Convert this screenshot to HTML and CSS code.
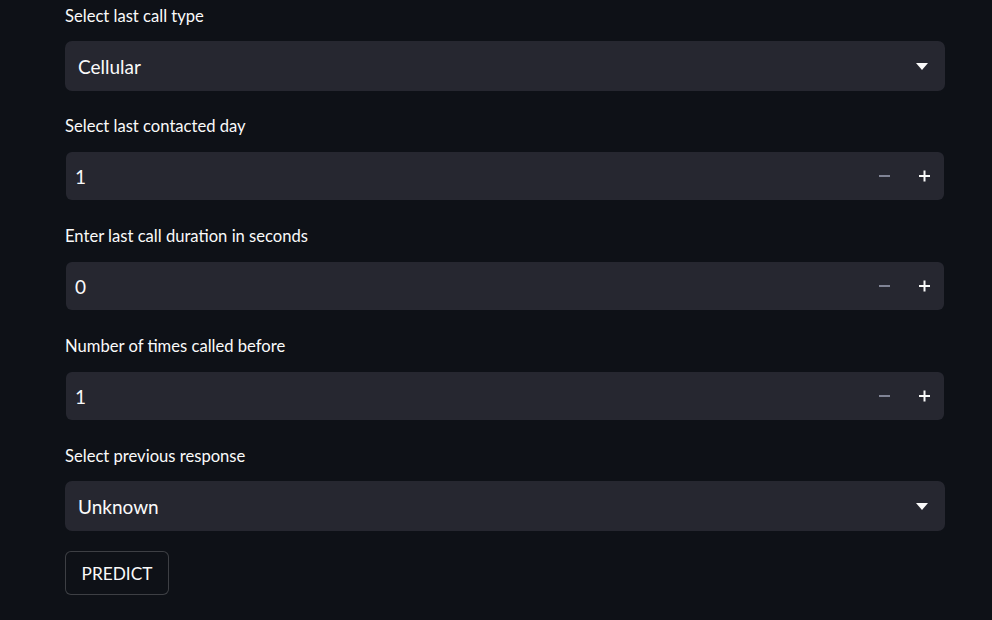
FILE: index.html
```html
<!DOCTYPE html>
<html>
<head>
<meta charset="utf-8">
<link rel="stylesheet" href="styles.css">
</head>
<body>
<main class="form">
  <div class="field">
    <label class="label">Select last call type</label>
    <div class="select">
      <span class="value">Cellular</span>
      <svg class="caret" width="12" height="7" viewBox="0 0 12 7"><path d="M0 0H12L6 7Z" fill="#fafafa"/></svg>
    </div>
  </div>
  <div class="field">
    <label class="label">Select last contacted day</label>
    <div class="number">
      <div class="number-inner">
        <span class="num-value">1</span>
        <span class="step minus"><svg width="11" height="12" viewBox="0 0 11 12"><rect x="0" y="5" width="11" height="2" fill="#808495"/></svg></span>
        <span class="step plus"><svg width="11" height="12" viewBox="0 0 11 12"><rect x="0" y="5" width="11" height="2" fill="#fafafa"/><rect x="4.5" y="0.5" width="2" height="11" fill="#fafafa"/></svg></span>
      </div>
    </div>
  </div>
  <div class="field">
    <label class="label">Enter last call duration in seconds</label>
    <div class="number">
      <div class="number-inner">
        <span class="num-value">0</span>
        <span class="step minus"><svg width="11" height="12" viewBox="0 0 11 12"><rect x="0" y="5" width="11" height="2" fill="#808495"/></svg></span>
        <span class="step plus"><svg width="11" height="12" viewBox="0 0 11 12"><rect x="0" y="5" width="11" height="2" fill="#fafafa"/><rect x="4.5" y="0.5" width="2" height="11" fill="#fafafa"/></svg></span>
      </div>
    </div>
  </div>
  <div class="field">
    <label class="label">Number of times called before</label>
    <div class="number">
      <div class="number-inner">
        <span class="num-value">1</span>
        <span class="step minus"><svg width="11" height="12" viewBox="0 0 11 12"><rect x="0" y="5" width="11" height="2" fill="#808495"/></svg></span>
        <span class="step plus"><svg width="11" height="12" viewBox="0 0 11 12"><rect x="0" y="5" width="11" height="2" fill="#fafafa"/><rect x="4.5" y="0.5" width="2" height="11" fill="#fafafa"/></svg></span>
      </div>
    </div>
  </div>
  <div class="field last">
    <label class="label">Select previous response</label>
    <div class="select">
      <span class="value">Unknown</span>
      <svg class="caret" width="12" height="7" viewBox="0 0 12 7"><path d="M0 0H12L6 7Z" fill="#fafafa"/></svg>
    </div>
  </div>
  <button class="btn">PREDICT</button>
</main>
</body>
</html>
```
FILE: styles.css
```css
* { box-sizing: border-box; }
html, body {
  margin: 0;
  padding: 0;
  background: #0e1117;
  color: #fafafa;
  font-family: "Lato", "Noto Sans", sans-serif;
  height: 100%;
  overflow: hidden;
}
.form {
  width: 880px;
  margin-left: 65px;
  padding-top: 4px;
  display: flex;
  flex-direction: column;
}
.field {
  display: flex;
  flex-direction: column;
  gap: 13px;
  margin-bottom: 23px;
}
.field.last { margin-bottom: 20px; }
.label {
  font-size: 16.6px;
  line-height: 24px;
  height: 24px;
  color: #fafafa;
}
.select {
  height: 50px;
  background: #262730;
  border-radius: 7px;
  display: flex;
  align-items: center;
  justify-content: space-between;
  padding: 0 17px 0 13px;
}
.value {
  font-size: 19px;
}
.caret { display: block; margin-top: 1px; }
.number {
  height: 50px;
  padding: 1px;
}
.number-inner {
  height: 48px;
  background: #262730;
  border-radius: 6px;
  display: flex;
  align-items: center;
  padding-left: 9px;
}
.num-value {
  flex: 1;
  font-size: 19px;
}
.step {
  width: 40px;
  height: 48px;
  display: flex;
  align-items: center;
  justify-content: center;
}
.step svg { display: block; }
.btn {
  align-self: flex-start;
  width: 104px;
  height: 44px;
  background: #0e1117;
  border: 1px solid rgba(250, 250, 250, 0.2);
  border-radius: 6px;
  color: #fafafa;
  font-family: inherit;
  font-size: 17.3px;
  padding: 0;
}
```
